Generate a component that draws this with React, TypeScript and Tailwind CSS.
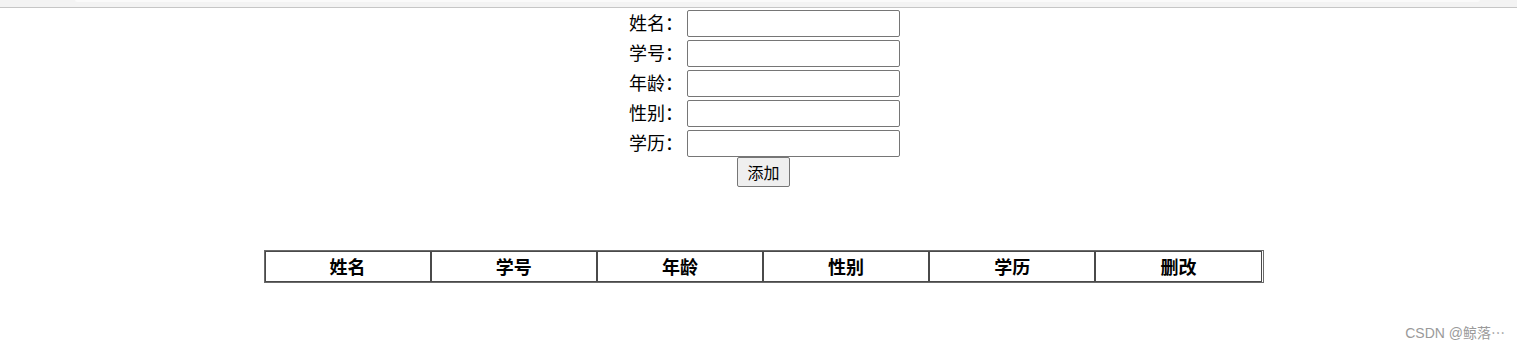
import React from "react";

const labels = ["姓名", "学号", "年龄", "性别", "学历"];
const headers = ["姓名", "学号", "年龄", "性别", "学历", "删改"];

export default function App() {
  return (
    <div
      className="relative w-[1517px] h-[350px] bg-white overflow-hidden text-black"
      style={{ fontFamily: '"Noto Sans CJK SC", "Noto Sans", sans-serif' }}
    >
      {/* browser chrome strip */}
      <div className="h-[8px] bg-[#f3f3f3] border-b border-[#c6c6c6] flex">
        <div className="ml-[75px] mr-[37px] flex-1 h-[2px] bg-[#fafafa] rounded-b-md" />
      </div>

      {/* form */}
      <div className="pl-[10px] mt-[2px] flex flex-col items-center">
        <div className="flex flex-col gap-[3px]">
          {labels.map((l) => (
            <div key={l} className="flex items-center h-[27px]">
              <span className="text-[18px] leading-[27px] w-[60px] text-right pr-[4px] relative top-[-1px]">
                {l}：
              </span>
              <input
                type="text"
                className="w-[213px] h-[27px] border border-[#767676] rounded-[2px] bg-white outline-none"
              />
            </div>
          ))}
        </div>
        <button className="w-[53px] h-[30px] border border-[#767676] rounded-[2px] bg-[#efefef] text-[16px] leading-[28px] text-black">
          添加
        </button>
      </div>

      {/* table */}
      <div className="pl-[10px] mt-[63px] flex justify-center">
        <div className="w-[1000px] border border-[#6a6a6a] pr-[1px]">
          <div className="grid grid-cols-6">
            {headers.map((h) => (
              <div
                key={h}
                className="h-[31px] border border-[#4a4a4a] flex items-center justify-center text-[18px] font-bold leading-[27px]"
              >
                {h}
              </div>
            ))}
          </div>
        </div>
      </div>

      {/* watermark */}
      <div
        className="absolute right-[12px] bottom-[9px] text-[14px] leading-[16px] text-[#9a9a9a]"
        style={{ fontFamily: '"Liberation Sans", "Noto Sans CJK SC", sans-serif' }}
      >
        CSDN @鲸落⋯
      </div>
    </div>
  );
}
